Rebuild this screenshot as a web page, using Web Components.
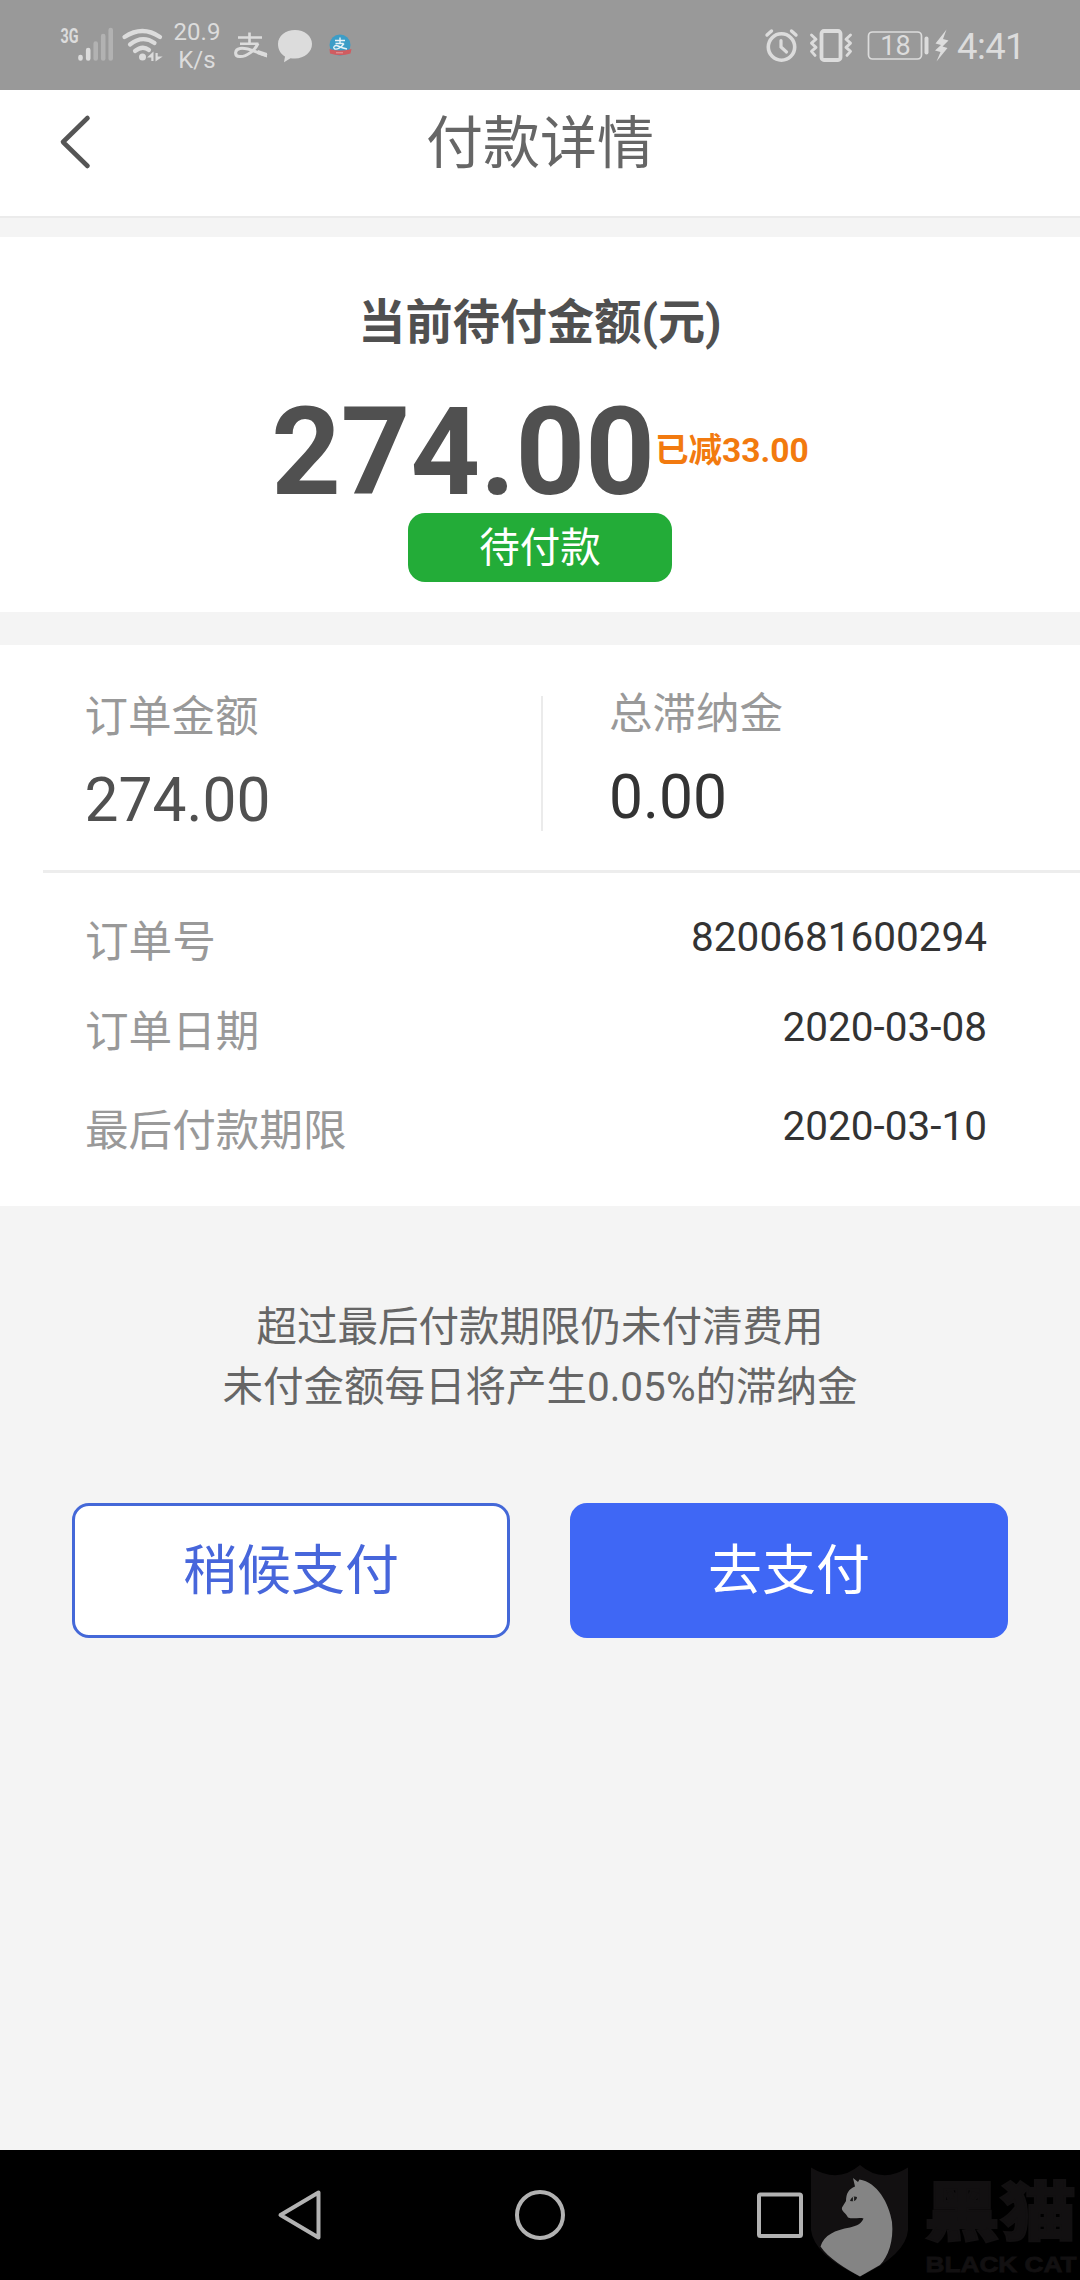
<!DOCTYPE html>
<html lang="zh-CN">
<head>
<meta charset="utf-8">
<title>付款详情</title>
<style>
html, body { margin: 0; padding: 0; background: #f4f4f4; }
body { font-family: Roboto, "Noto Sans CJK SC", sans-serif; width: 1080px; height: 2280px; overflow: hidden; }
</style>
</head>
<body>
<payment-page></payment-page>
<script>
const define = (name, html) => {
  const t = document.createElement('template');
  t.innerHTML = html;
  customElements.define(name, class extends HTMLElement {
    constructor() {
      super();
      this.attachShadow({ mode: 'open' }).append(t.content.cloneNode(true));
    }
  });
};

define('status-bar', `
<style>
:host { display: flex; justify-content: space-between; box-sizing: border-box; height: 90px; background: #999; color: #dcdcdc; }
svg { display: block; flex: none; }
.side { display: flex; height: 90px; }
.left { padding-left: 60px; }
.right { padding-right: 55px; }
.speed { width: 48px; margin: 18px 0 0 1px; padding-right: 1px; font-size: 24px; line-height: 28px; text-align: center; }
.time { font-size: 36.5px; line-height: 90px; padding-top: 2px; letter-spacing: -0.6px; }
</style>
<div class="side left">
  <svg width="112" height="90" viewBox="60 0 112 90">
    <text x="60.5" y="42.500" font-size="20" font-weight="700" textLength="18" lengthAdjust="spacingAndGlyphs" fill="#dcdcdc">3G</text>
    <g stroke-width="4.6" stroke-linecap="round" stroke="#dcdcdc">
      <path d="M80.500 57v1.500M88.200 50v8.500"/>
      <path d="M95.700 43.500v15M103.200 36v22.500M110.700 30v28.500" stroke="#b2b2b2"/>
    </g>
    <g fill="none" stroke="#dcdcdc" stroke-width="4.200" stroke-linecap="round">
      <path d="M124.500 37Q142.500 25 160 37"/>
      <path d="M130 44.500Q142.500 34.500 154.500 43"/>
      <path d="M135 51Q142.500 45 149 50"/>
    </g>
    <circle cx="142.500" cy="57" r="3.500" fill="#dcdcdc"/>
    <path d="M153.500 51.500v9.500h-2.200v-3.500h-4.300zM155.500 53h2.200v3.500h5l-7.200 5z" fill="#dcdcdc"/>
  </svg>
  <div class="speed">20.9<br>K/s</div>
  <svg width="141" height="90" viewBox="221 0 141 90">
    <g fill="none" stroke="#dcdcdc" stroke-width="2.600">
      <path d="M237 37.500h24M248.500 32.500v11M239 43.700h18.500"/>
      <path d="M257 43.500C254 50 246 57 238.500 56.500C233 56 233.500 49.500 239 48.500C247 47 255 53 266 55.500" stroke-width="3"/>
    </g>
    <path d="M257 50l9 3v4.500l-10-3.500z" fill="#dcdcdc"/>
    <path d="M294 30C303.500 30 311 36 311 44S303.500 58.500 294 58.500Q291.500 58.500 289.500 58.200L283 62.200L284 56.500C279.800 54 277 49.500 277 44C277 36 284.500 30 294 30Z" fill="#dcdcdc"/>
    <circle cx="339" cy="45" r="10.500" fill="#3c9dc7"/>
    <path d="M328.500 49Q339 52 350.500 49L349.500 53.500Q339 57 329 53.500Z" fill="#d05c60"/>
    <path d="M334 40.500h10M339 37.500v5.500M334.500 43.500h8M343 43.500C340 48 336 49.500 334 49C331 47.500 334 44.500 337 46Q341 48 346 49" fill="none" stroke="#e8f3f7" stroke-width="1.400"/>
    <path d="M335 52.800h7" stroke="#e8a0a0" stroke-width="1"/>
  </svg>
</div>
<div class="side right">
  <svg width="194" height="90" viewBox="763 0 194 90">
    <g fill="none" stroke="#dcdcdc" stroke-linecap="round">
      <circle cx="781.500" cy="47" r="13.200" stroke-width="3.600"/>
      <path d="M781 40.500v6.500l5.500 5" stroke-width="3.200"/>
      <path d="M767 35l4.500-4M796 35l-4.500-4" stroke-width="3.400"/>
      <rect x="821.500" y="31" width="19" height="29" rx="2.500" stroke-width="3.800"/>
      <path d="M811.500 35l4.500 4.200-4.500 4 4.500 4.200-4.500 4 3.500 4M850.500 35l-4.500 4.200 4.500 4-4.500 4.200 4.500 4-3.500 4" stroke-width="2.900" stroke-linejoin="round"/>
      <rect x="868.500" y="32" width="53" height="27" rx="4" stroke-width="1.700"/>
      <path d="M926.500 38.500v14" stroke-width="4"/>
    </g>
    <text x="895.500" y="55" font-size="27" text-anchor="middle" fill="#dcdcdc">18</text>
    <path d="M946.500 29.500L935.500 43.500L941 45L935 50.500L940.500 52L936.500 61.500L947.500 48L942.500 46.500L948.500 40.500L943 39Z" fill="#dcdcdc"/>
  </svg>
  <div class="time">4:41</div>
</div>`);

define('nav-header', `
<style>
:host { display: grid; grid-template-columns: 110px 1fr 110px; box-sizing: border-box; height: 128px; padding-top: 22px; background: #fff; border-bottom: 2px solid #ebebeb; }
svg { display: block; justify-self: end; margin-right: 16px; }
.t { text-align: center; font-size: 57px; line-height: 63px; color: #666; }
</style>
<svg width="38" height="60" viewBox="57 112 38 60"><path d="M88.500 118L64 142L88.500 166" fill="none" stroke="#555" stroke-width="4.600" stroke-linecap="round" stroke-linejoin="round"/></svg>
<div class="t"><slot></slot></div>`);

define('amount-card', `
<style>
:host { display: flex; flex-direction: column; align-items: center; box-sizing: border-box; height: 375px; margin-top: 19px; padding-top: 56px; background: #fff; }
.t { font-size: 47.200px; font-weight: 700; line-height: 60px; color: #505050; }
.row { display: flex; align-items: center; margin-top: 40px; height: 120px; font-weight: 700; line-height: 120px; }
.amt { font-size: 121.500px; color: #505050; }
.off { font-size: 33.600px; color: #f27a0f; padding-bottom: 5px; }
.badge { width: 264px; height: 69px; border-radius: 17px; background: #23ac38; color: #fff; font-size: 40.500px; line-height: 70px; text-align: center; }
</style>
<div class="t"><slot name="title"></slot></div>
<div class="row"><span class="amt"><slot name="amount"></slot></span><span class="off"><slot name="discount"></slot></span></div>
<div class="badge"><slot name="status"></slot></div>`);

define('stat-cell', `
<style>
:host { display: block; }
.l { font-size: 43.500px; line-height: 50px; color: #999; }
.v { margin-top: 23px; font-size: 60.500px; line-height: 70px; }
</style>
<div class="l"><slot name="label"></slot></div>
<div class="v"><slot></slot></div>`);

define('detail-row', `
<style>
:host { display: flex; justify-content: space-between; align-items: flex-start; padding: 0 93px 0 85px; line-height: 50px; }
.l { font-size: 43.600px; color: #999; padding-top: 6px; }
.v { font-size: 40.500px; color: #333; }
</style>
<span class="l"><slot name="label"></slot></span><span class="v"><slot></slot></span>`);

define('order-card', `
<style>
:host { display: block; box-sizing: border-box; height: 561px; margin-top: 33px; background: #fff; }
.stats { display: grid; grid-template-columns: 541px 2px 1fr; height: 225px; }
.a { padding: 48px 0 0 84.500px; color: #505050; }
.sep { margin-top: 51px; height: 135px; background: #ebebeb; }
.b { padding: 45px 0 0 66px; color: #333; }
.line { height: 3px; margin-left: 43px; background: #ededed; }
.rows { display: flex; flex-direction: column; padding-top: 39px; }
</style>
<div class="stats"><div class="a"><slot name="first"></slot></div><div class="sep"></div><div class="b"><slot name="second"></slot></div></div>
<div class="line"></div>
<div class="rows"><slot></slot></div>`);

define('late-notice', `
<style>:host { display: block; padding-top: 91px; font-size: 40.500px; line-height: 60px; color: #666; text-align: center; }</style>
<slot></slot>`);

define('action-button', `
<style>
:host { display: block; flex: 1; box-sizing: border-box; height: 135px; border: 3px solid #4468d8; border-radius: 17px; background: #fff; color: #4766db; font-size: 54px; line-height: 131px; text-align: center; }
:host([primary]) { background: #3f67f5; border-color: #3f67f5; color: #fff; }
</style><slot></slot>`);

define('action-bar', `
<style>:host { display: flex; gap: 60px; padding: 86px 72px 0; }</style><slot></slot>`);

define('system-nav', `
<style>
:host { display: flex; align-items: center; gap: 190px; box-sizing: border-box; height: 130px; padding-left: 275px; background: #000; }
svg { display: block; flex: none; }
path, circle, rect { fill: none; stroke: #b2b2b2; stroke-width: 4; stroke-linejoin: round; }
</style>
<svg width="50" height="60" viewBox="275 2185 50 60"><path d="M318.500 2192.500V2237.500L280.500 2215Z"/></svg>
<svg width="50" height="60" viewBox="515 2185 50 60"><circle cx="540" cy="2215" r="23"/></svg>
<svg width="50" height="60" viewBox="755 2185 50 60"><rect x="759" y="2194.500" width="42" height="41.500" rx="1.500"/></svg>`);

define('cat-watermark', `
<style>
:host { position: absolute; right: 0; bottom: 0; display: block; width: 270px; height: 120px; }
svg { display: block; }
</style>
<svg width="270" height="120" viewBox="810 2160 270 120">
  <path d="M811 2167.500Q838 2184 860 2165Q882 2184 908 2167.500V2230Q906 2255 860 2276.500Q814 2255 811 2230Z" fill="#121011"/>
  <path d="M853 2178L858 2182L859.500 2179.500C877 2182 889 2203 892 2222C894 2241 888 2257 880 2265L860 2276.500C846 2269 828 2258 820.500 2246.500C824 2235 835 2230 850 2227.500C857 2226 862 2223 863.500 2218.500C859 2217 853 2219.500 848 2217.500C846 2213 841 2211 842 2207.500L846 2201C846 2193 849 2189 855 2186.500Z" fill="#848484"/>
  <path d="M850 2201Q852 2195 857 2197Q857 2202 850 2201Z" fill="#1b1b1b"/>
  <path d="M853.500 2196.500v5" stroke="#848484" stroke-width="1.200"/>
  <text x="924" y="2235" font-family="Noto Sans CJK SC" font-size="64" font-weight="900" textLength="152" lengthAdjust="spacingAndGlyphs" fill="#121011" stroke="#121011" stroke-width="2">黑猫</text>
  <text x="925.5" y="2272" font-family="Liberation Sans" font-size="22" font-weight="700" textLength="151" lengthAdjust="spacingAndGlyphs" fill="#121011" stroke="#121011" stroke-width=".8">BLACK CAT</text>
</svg>`);

define('payment-page', `
<style>
:host { position: relative; display: flex; flex-direction: column; width: 1080px; height: 2280px; background: #f4f4f4; }
system-nav { margin-top: auto; }
detail-row { height: 90px; }
detail-row.date { height: 99px; }
</style>
<status-bar></status-bar>
<nav-header>付款详情</nav-header>
<amount-card>
  <span slot="title">当前待付金额(元)</span>
  <span slot="amount">274.00</span>
  <span slot="discount">已减33.00</span>
  <span slot="status">待付款</span>
</amount-card>
<order-card>
  <stat-cell slot="first"><span slot="label">订单金额</span>274.00</stat-cell>
  <stat-cell slot="second"><span slot="label">总滞纳金</span>0.00</stat-cell>
  <detail-row><span slot="label">订单号</span>8200681600294</detail-row>
  <detail-row class="date"><span slot="label">订单日期</span>2020-03-08</detail-row>
  <detail-row><span slot="label">最后付款期限</span>2020-03-10</detail-row>
</order-card>
<late-notice>超过最后付款期限仍未付清费用<br>未付金额每日将产生0.05%的滞纳金</late-notice>
<action-bar>
  <action-button>稍候支付</action-button>
  <action-button primary>去支付</action-button>
</action-bar>
<system-nav></system-nav>
<cat-watermark></cat-watermark>`);
</script>
</body>
</html>
